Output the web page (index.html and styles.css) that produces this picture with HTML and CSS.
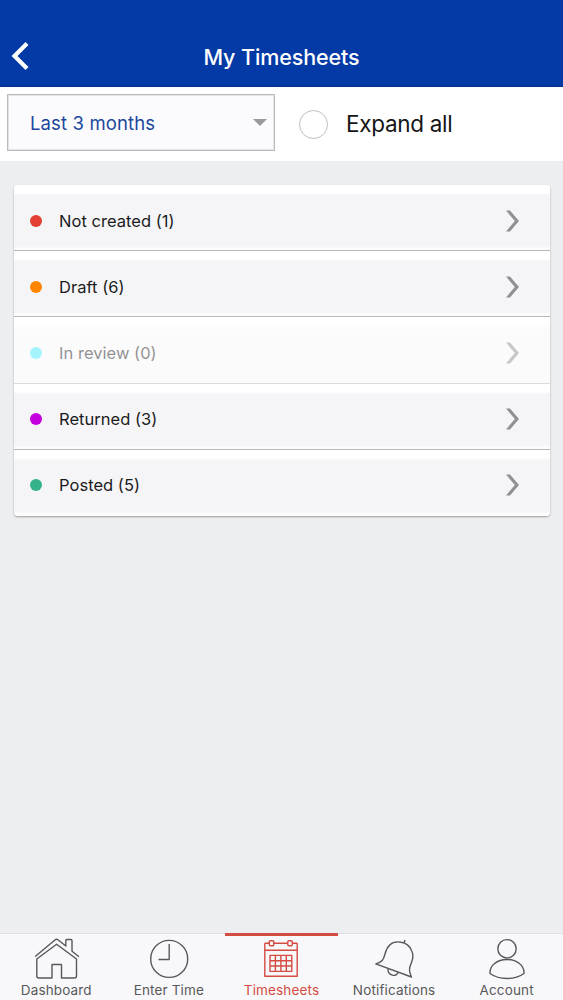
FILE: index.html
```html
<!DOCTYPE html>
<html lang="en">
<head>
<meta charset="utf-8">
<title>My Timesheets</title>
<link rel="stylesheet" href="styles.css">
</head>
<body>
<div class="app">
  <header class="header">
    <svg class="back" viewBox="0 0 20 32"><path d="M17 3.500 4.500 16 17 28.500"/></svg>
    <h1 class="title">My Timesheets</h1>
  </header>
  <div class="filters">
    <div class="select"><span class="select-text">Last 3 months</span><span class="caret"></span></div>
    <span class="radio"></span>
    <span class="expand">Expand all</span>
  </div>
  <main class="content">
    <ul class="list">
      <li class="row"><span class="dot red"></span><span class="name">Not created (1)</span><svg class="chevron" viewBox="0 0 16 24"><path d="M2 1.500h4L15 12 6 22.500H2L10.800 12Z"/></svg></li>
      <li class="row"><span class="dot orange"></span><span class="name">Draft (6)</span><svg class="chevron" viewBox="0 0 16 24"><path d="M2 1.500h4L15 12 6 22.500H2L10.800 12Z"/></svg></li>
      <li class="row disabled"><span class="dot cyan"></span><span class="name">In review (0)</span><svg class="chevron" viewBox="0 0 16 24"><path d="M2 1.500h4L15 12 6 22.500H2L10.800 12Z"/></svg></li>
      <li class="row"><span class="dot purple"></span><span class="name">Returned (3)</span><svg class="chevron" viewBox="0 0 16 24"><path d="M2 1.500h4L15 12 6 22.500H2L10.800 12Z"/></svg></li>
      <li class="row"><span class="dot green"></span><span class="name">Posted (5)</span><svg class="chevron" viewBox="0 0 16 24"><path d="M2 1.500h4L15 12 6 22.500H2L10.800 12Z"/></svg></li>
    </ul>
  </main>
  <nav class="tabs">
    <div class="tab">
      <svg class="icon" viewBox="0 0 48 44"><path d="M3.200 20.500 23.200 3.800Q24.500 2.800 26 3.800L33.800 10V4.700Q33.800 3.500 35 3.500H38.800Q40 3.500 40 4.700V15.200L47 20.800"/><path d="M24.600 8.200 4.800 23V40Q4.800 42 6.800 42H20V28.500H29.500V42H42.500Q44.500 42 44.500 40V23Z"/></svg>
      <span class="label">Dashboard</span>
    </div>
    <div class="tab">
      <svg class="icon" viewBox="0 0 48 44"><circle cx="24.200" cy="22.900" r="18.500"/><path d="M24.200 8V23.500H13.500"/></svg>
      <span class="label">Enter Time</span>
    </div>
    <div class="tab active">
      <svg class="icon" viewBox="0 0 48 44"><path d="M12 7.300H8.500Q7.800 7.300 7.800 8V40.300H40.200V8Q40.200 7.300 39.500 7.300H36M16 7.300H30.500M7.800 14.200H40.200M13 19.400H34.800V35.400H13ZM18.400 19.400V35.400M23.900 19.400V35.400M29.300 19.400V35.400M13 24.700H34.800M13 30H34.800"/><rect x="12.300" y="4.800" width="4.500" height="5" rx="1"/><rect x="30.800" y="4.800" width="4.500" height="5" rx="1"/></svg>
      <span class="label">Timesheets</span>
    </div>
    <div class="tab">
      <svg class="icon" viewBox="0 0 48 44"><path d="M31 6.200C22 4.600 17 10 15 18C13.500 24 12 26 5.800 27.800L41.500 41C39.800 37 38.500 35 40 30.500C43 23 44 19 41.500 14.500C39.500 9.500 36 6.900 31 6.200M34 7 35 4M18 33C17.500 39.500 26.500 41.500 28 36.500"/></svg>
      <span class="label">Notifications</span>
    </div>
    <div class="tab">
      <svg class="icon" viewBox="0 0 48 44"><circle cx="24" cy="12.800" r="9.200"/><path d="M7 37.500C6.500 29.500 14 23.500 24 23.500S41.500 29.500 41 37.500Q34 42.500 24 42.500T7 37.500Z"/></svg>
      <span class="label">Account</span>
    </div>
  </nav>
</div>
</body>
</html>
```
FILE: styles.css
```css
* { box-sizing: border-box; }
body { margin: 0; font-family: Inter, "Liberation Sans", sans-serif; }
.app { display: flex; flex-direction: column; width: 563px; height: 1000px; background: #edeef0; }
.header { display: grid; grid-template-columns: 40px 1fr 40px; align-items: center; height: 87px; padding-top: 27px; background: #033aa6; border-bottom: 1px solid #04308c; }
.back { width: 20px; height: 32px; margin-left: 10px; margin-top: -2px; fill: none; stroke: #fff; stroke-width: 4.200; }
.title { margin: 0; text-align: center; color: #fff; font-size: 21.500px; font-weight: 500; line-height: 28px; letter-spacing: -0.100px; }
.filters { display: flex; align-items: center; height: 74px; padding: 0 0 3px 7px; background: #fff; }
.select { display: flex; align-items: center; justify-content: space-between; width: 268px; height: 57px; padding: 0 7px 0 22px; border: 1px solid #bdb9be; background: #fbfafc; box-shadow: inset 0 0 0 1px #e6e3e7; }
.select-text { color: #1c479c; font-size: 18.500px; letter-spacing: 0.130px; }
.caret { border: 7px solid transparent; border-top-color: #9a9a9c; border-bottom: 0; }
.radio { width: 29px; height: 29px; margin-left: 24px; margin-top: 3px; border: 1px solid #bfbfc1; border-radius: 50%; }
.expand { margin-left: 18px; margin-top: 1px; color: #151517; font-size: 22.500px; letter-spacing: -0.300px; }
.content { flex: 1; padding: 24px 13px 0 14px; }
.list { margin: 0; padding: 0; list-style: none; overflow: hidden; border-radius: 4px; background: #fff; box-shadow: 0 1px 2px rgba(0,0,0,.35); }
.row { display: flex; align-items: center; height: 66.200px; padding: 6px 30px 0 16px; background: linear-gradient(#fff 8px, #f5f5f7 10px, #f5f5f7 61px, #fdfdfe 64px); border-bottom: 1px solid #b8b8bb; }
.row:last-child { border-bottom-color: transparent; }
.disabled { background: linear-gradient(#fff 4px, #fbfbfc 14px); border-bottom-color: #dcdce0; }
.disabled > * { opacity: .48; }
.dot { width: 12px; height: 12px; margin-right: 17px; border-radius: 50%; }
.red { background: #e33e32; }
.orange { background: #ff8500; }
.cyan { background: #44eaff; }
.purple { background: #c400df; }
.green { background: #34b28b; }
.name { flex: 1; color: #1b1b1d; font-size: 16.500px; letter-spacing: 0.030px; }
.chevron { width: 16px; height: 24px; fill: #919194; }
.tabs { display: grid; grid-template-columns: repeat(5, 1fr); height: 67px; background: #f8f8fa; box-shadow: inset 0 1px #dfdfe2; }
.tab { display: flex; flex-direction: column; align-items: center; padding-top: 3px; color: #58585a; }
.active { color: #d44b42; box-shadow: inset 0 3px #d44b42; }
.icon { width: 48px; height: 44px; fill: none; stroke: currentColor; stroke-width: 1.400; stroke-linejoin: round; }
.label { margin-top: 1px; font-size: 13.500px; line-height: 18px; letter-spacing: 0.150px; white-space: nowrap; }
```
